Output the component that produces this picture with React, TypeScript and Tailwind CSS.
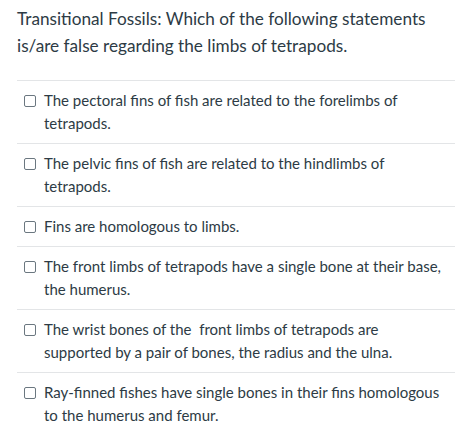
const answers = [
  "The pectoral fins of fish are related to the forelimbs of tetrapods.",
  "The pelvic fins of fish are related to the hindlimbs of tetrapods.",
  "Fins are homologous to limbs.",
  "The front limbs of tetrapods have a single bone at their base, the humerus.",
  "The wrist bones of the\u00a0 front limbs of tetrapods are supported by a pair of bones, the radius and the ulna.",
  "Ray-finned fishes have single bones in their fins homologous to the humerus and femur.",
];

export default function App() {
  return (
    <div className="min-h-screen bg-white pl-[17px] pt-[5px] font-['Lato','Noto_Sans',sans-serif] text-[#2d3b45]">
      <h2 className="pr-[10px] pb-[21px] text-[17.2px] leading-[27px] font-normal">
        Transitional Fossils: Which of the following statements is/are false regarding the limbs of tetrapods.
      </h2>

      <div>
        {answers.map((answer, i) => (
          <label key={i} className="flex items-start border-t border-[#e3e5e7] py-[8px] pl-[7px] pr-[10px]">
            <input type="checkbox" className="sr-only" />
            <span className="mt-[6px] size-[12px] shrink-0 rounded-[2px] border border-[#6b7780] bg-white" />
            <span className="ml-[8px] text-[15px] leading-[23px]">{answer}</span>
          </label>
        ))}
      </div>
    </div>
  );
}
